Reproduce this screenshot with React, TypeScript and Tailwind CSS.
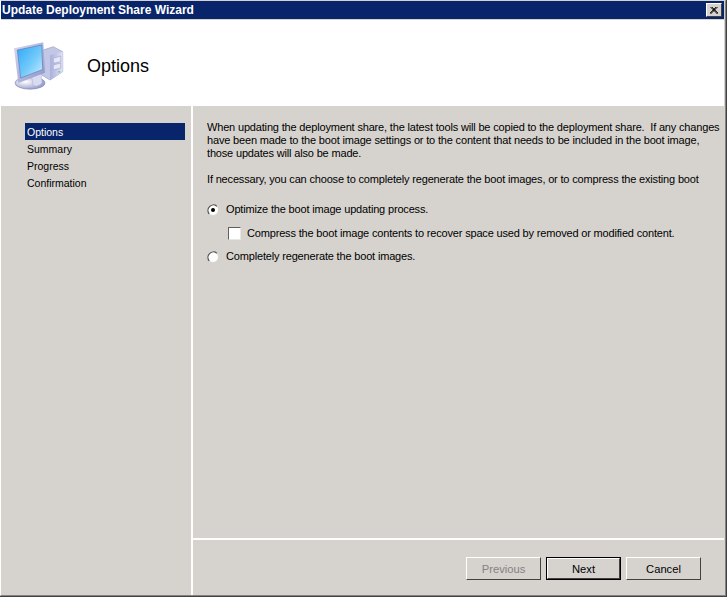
const font = { fontFamily: '"Liberation Sans", Arial, sans-serif' };

function Computer() {
  return (
    <svg width="50" height="48" viewBox="0 0 50 48" className="block">
      <defs>
        <linearGradient id="scr" x1="0" y1="0" x2="1" y2="1">
          <stop offset="0" stopColor="#2fa8f6" />
          <stop offset="0.55" stopColor="#72caf9" />
          <stop offset="1" stopColor="#cdeeff" />
        </linearGradient>
        <linearGradient id="tower" x1="0" y1="0" x2="1" y2="0">
          <stop offset="0" stopColor="#aab0dc" />
          <stop offset="1" stopColor="#dfe2f4" />
        </linearGradient>
        <linearGradient id="mon" x1="0" y1="0" x2="1" y2="1">
          <stop offset="0" stopColor="#d9dbee" />
          <stop offset="1" stopColor="#8d93c8" />
        </linearGradient>
        <radialGradient id="base" cx="0.35" cy="0.4" r="0.8">
          <stop offset="0" stopColor="#ffffff" />
          <stop offset="1" stopColor="#8087bd" />
        </radialGradient>
      </defs>
      <path d="M29.3 8 L39.3 4.7 L48.7 9.7 L48.7 29.7 L36 38 L27.7 33 Z" fill="#c3c7e6" stroke="#8f95c6" strokeWidth="0.6" />
      <path d="M36 13 L48.7 9.7 L48.7 29.7 L36 38 Z" fill="url(#tower)" />
      <path d="M39.3 16.3 L46.7 14 L46.7 19.7 L39.3 21.3 Z" fill="#e6e8f6" stroke="#8f95c6" strokeWidth="0.5" />
      <path d="M39.3 23 L46.7 21 L46.7 26 L39.3 28 Z" fill="#e6e8f6" stroke="#8f95c6" strokeWidth="0.5" />
      <rect x="44.5" y="29" width="1.6" height="1.6" fill="#5fd070" />
      <ellipse cx="16" cy="41" rx="15" ry="6.2" fill="url(#base)" stroke="#7d82ba" strokeWidth="0.6" />
      <path d="M17 30 L27 28 L28 41 Q23 46 19 43 Z" fill="#d9dcf0" stroke="#9da2d0" strokeWidth="0.4" />
      <path d="M0 6.3 L29.3 0.3 L31 30.7 L4.3 41 Z" fill="url(#mon)" />
      <path d="M3.3 8 L27.7 3 L28.7 27.5 L6.7 36 Z" fill="url(#scr)" stroke="#5c70b8" strokeWidth="0.6" />
    </svg>
  );
}

function WinButton({ label, disabled, isDefault }: { label: string; disabled?: boolean; isDefault?: boolean }) {
  return (
    <div className={isDefault ? "border border-black" : ""}>
      <div
        className={`flex items-center justify-center bg-[#d6d3ce] border border-t-white border-l-white border-r-[#424142] border-b-[#424142] text-[11.2px] pt-px ${
          isDefault ? "w-[73px] h-[21px]" : "w-[75px] h-[23px]"
        } ${disabled ? "text-[#848284]" : "text-black"}`}
      >
        {label}
      </div>
    </div>
  );
}

function Radio({ checked }: { checked?: boolean }) {
  return (
    <svg width="12" height="12" viewBox="0 0 12 12" className="block shrink-0">
      <circle cx="6" cy="6" r="5.5" fill="#ffffff" stroke="#d6d3ce" />
      <path d="M2.2 9.8 A5.4 5.4 0 0 1 9.8 2.2" fill="none" stroke="#505050" strokeWidth="1.2" />
      {checked && <circle cx="6" cy="6" r="2" fill="#000000" />}
    </svg>
  );
}

export default function App() {
  return (
    <div
      className="w-[727px] h-[597px] flex flex-col bg-[#d6d3ce] border-r border-b border-r-[#424142] border-b-[#424142] overflow-hidden text-black"
      style={font}
    >
      <div className="flex flex-col flex-1 min-h-0 border-t border-l border-r border-b border-t-[#d6d3ce] border-l-white border-r-[#848284] border-b-[#848284]">
        <div className="flex flex-col flex-1 min-h-0 mr-px">
          {/* title bar */}
          <div className="h-[18px] bg-[#08246b] flex items-center justify-between shrink-0 pr-[2px]">
            <span className="text-white font-bold text-[12px] leading-none pl-px">Update Deployment Share Wizard</span>
            <div className="w-[16px] h-[14px] bg-[#d6d3ce] border border-t-white border-l-white border-r-[#424142] border-b-[#424142] flex items-center justify-center">
              <svg width="8" height="7" viewBox="0 0 8 7">
                <path d="M0.5 0 L7.5 7 M1.8 0 L8 6.2 M7.5 0 L0.5 7 M6.2 0 L0 6.2" stroke="#000" strokeWidth="1" fill="none" />
              </svg>
            </div>
          </div>
          <div className="h-px bg-[#d6d3ce] shrink-0" />
          {/* header */}
          <div className="h-[86px] bg-white flex items-center shrink-0 pt-[6px]">
            <div className="ml-[13px]">
              <Computer />
            </div>
            <div className="ml-[23px] text-[18px] leading-none">Options</div>
          </div>
          {/* body */}
          <div className="flex flex-1 min-h-0">
            <div className="w-[190px] shrink-0 pt-[17px] pl-[24px] pr-[6px] text-[10.5px] leading-[18px]">
              <div className="bg-[#08246b] text-white pl-[2px] h-[17px]">Options</div>
              <div className="pl-[2px] h-[17px]">Summary</div>
              <div className="pl-[2px] h-[17px]">Progress</div>
              <div className="pl-[2px] h-[17px]">Confirmation</div>
            </div>
            <div className="w-[2px] bg-white shrink-0" />
            <div className="flex-1 flex flex-col min-w-0">
              <div className="flex-1 min-h-0 pl-[14px] pt-[15px] text-[11px] tracking-[-0.17px] whitespace-nowrap">
                <div className="leading-[13px]">
                  <div>When updating the deployment share, the latest tools will be copied to the deployment share.&nbsp; If any changes</div>
                  <div>have been made to the boot image settings or to the content that needs to be included in the boot image,</div>
                  <div>those updates will also be made.</div>
                </div>
                <div className="leading-[13px] mt-[13px]">
                  If necessary, you can choose to completely regenerate the boot images, or to compress the existing boot
                </div>
                <div className="mt-[17px] flex items-center gap-[7px] h-[13px]">
                  <Radio checked />
                  <span>Optimize the boot image updating process.</span>
                </div>
                <div className="mt-[11px] ml-[21px] flex items-center gap-[6px] h-[13px]">
                  <div className="w-[13px] h-[13px] bg-white border border-t-[#606060] border-l-[#606060] border-r-[#e8e6e0] border-b-[#e8e6e0] shrink-0" />
                  <span>Compress the boot image contents to recover space used by removed or modified content.</span>
                </div>
                <div className="mt-[10px] flex items-center gap-[7px] h-[13px]">
                  <Radio />
                  <span>Completely regenerate the boot images.</span>
                </div>
              </div>
              <div className="h-[2px] bg-white shrink-0" />
              <div className="h-[55px] shrink-0 flex items-start justify-end pt-[17px] pr-[23px] gap-[5px]">
                <WinButton label="Previous" disabled />
                <WinButton label="Next" isDefault />
                <WinButton label="Cancel" />
              </div>
            </div>
          </div>
        </div>
      </div>
    </div>
  );
}
